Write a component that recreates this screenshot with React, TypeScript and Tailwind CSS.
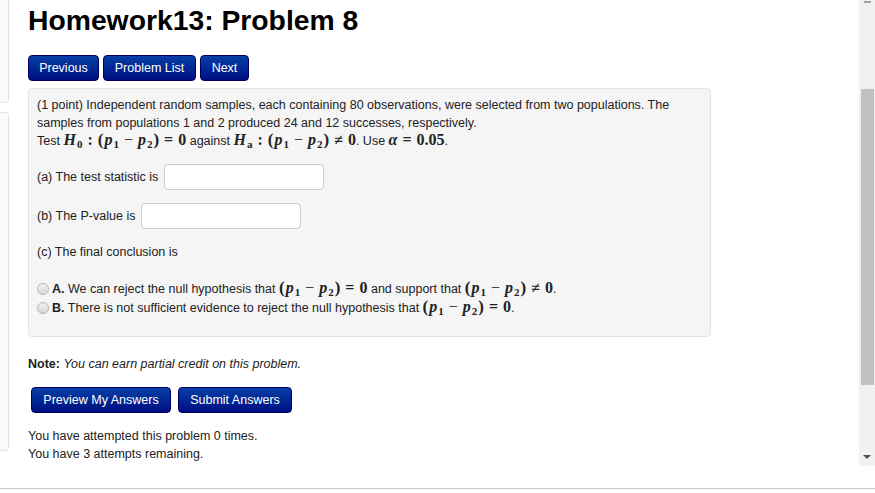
import React from 'react';

const sans = { fontFamily: '"Liberation Sans", Arial, sans-serif' };

function M({ children }: { children: React.ReactNode }) {
  return (
    <span className="font-bold text-[16px] leading-[0]" style={{ fontFamily: '"Liberation Serif", "Times New Roman", serif' }}>
      {children}
    </span>
  );
}

function V({ n, sub }: { n: string; sub?: string }) {
  return (
    <span>
      <i>{n}</i>
      {sub && <span className="ml-[1px] text-[11px] relative top-[3px]">{sub}</span>}
    </span>
  );
}

function Op({ c }: { c: string }) {
  return <span className="mx-[5px]">{c}</span>;
}

function Diff() {
  return (
    <>
      <span className="mr-[1px] text-[17px]">(</span>
      <V n="p" sub="1" />
      <span className="mx-[5px] font-normal">−</span>
      <V n="p" sub="2" />
      <span className="ml-[1px] text-[17px]">)</span>
    </>
  );
}

function NavButton({ label, className = '' }: { label: string; className?: string }) {
  return (
    <button
      className={`h-[26px] rounded-[4px] border border-[#00005e] bg-gradient-to-b from-[#0b3ea6] to-[#000a82] text-[12.5px] text-white ${className}`}
    >
      {label}
    </button>
  );
}

function AnswerInput({ className = '' }: { className?: string }) {
  return <input type="text" className={`h-[26px] w-[160px] rounded-[4px] border border-[#cccccc] bg-white ${className}`} />;
}

function Radio() {
  return (
    <span className="inline-block h-[12px] w-[12px] shrink-0 rounded-full border border-[#b5b5b5] bg-gradient-to-b from-[#f4f4f4] to-[#d6d6d6]" />
  );
}

export default function App() {
  return (
    <div className="h-[493px] w-[875px] overflow-hidden bg-white text-[#222]" style={sans}>
      <div className="flex h-[488px]">
        {/* sidebar edges peeking in from the left */}
        <div className="flex w-[9px] shrink-0 flex-col">
          <div className="h-[103px] rounded-br-[4px] border-b border-r border-[#e3e3e3] bg-[#fafafa]" />
          <div className="mt-[9px] h-[339px] rounded-r-[4px] border-y border-r border-[#e3e3e3] bg-[#fafafa]" />
        </div>

        <div className="flex-1 pl-[19px]">
          <h1 className="mt-[5px] text-[28.3px] font-bold leading-[30px] text-black">Homework13: Problem 8</h1>

          <div className="mt-[20px] flex gap-1">
            <NavButton label="Previous" className="w-[71px]" />
            <NavButton label="Problem List" className="w-[93px]" />
            <NavButton label="Next" className="w-[49px]" />
          </div>

          <div className="mt-[7px] h-[249px] w-[683px] rounded-[4px] border border-[#e3e3e3] bg-[#f5f5f5] px-[8px] pt-[7px] text-[12.5px] leading-[18px]">
            <p>
              (1 point) Independent random samples, each containing 80 observations, were selected from two populations. The
              samples from populations 1 and 2 produced 24 and 12 successes, respectively.
              <br />
              Test{' '}
              <M>
                <V n="H" sub="0" />
                <Op c=":" />
                <Diff />
                <Op c="=" />0
              </M>{' '}
              against{' '}
              <M>
                <V n="H" sub="a" />
                <Op c=":" />
                <Diff />
                <Op c="≠" />0
              </M>
              . Use{' '}
              <M>
                <i>α</i>
                <Op c="=" />0.05
              </M>
              .
            </p>

            <div className="mt-[14px] flex items-center gap-[6px]">
              <span>(a) The test statistic is</span>
              <AnswerInput />
            </div>

            <div className="mt-[13px] flex items-center gap-[6px]">
              <span>(b) The P-value is</span>
              <AnswerInput />
            </div>

            <p className="mt-[14px]">(c) The final conclusion is</p>

            <div className="mt-[19px] flex flex-col">
              <div className="flex items-center gap-[3px]">
                <Radio />
                <span>
                  <b>A.</b> We can reject the null hypothesis that{' '}
                  <M>
                    <Diff />
                    <Op c="=" />0
                  </M>{' '}
                  and support that{' '}
                  <M>
                    <Diff />
                    <Op c="≠" />0
                  </M>
                  .
                </span>
              </div>
              <div className="mt-[1px] flex items-center gap-[3px]">
                <Radio />
                <span>
                  <b>B.</b> There is not sufficient evidence to reject the null hypothesis that{' '}
                  <M>
                    <Diff />
                    <Op c="=" />0
                  </M>
                  .
                </span>
              </div>
            </div>
          </div>

          <p className="mt-[18px] text-[12.5px] leading-[18px]">
            <b>Note:</b> <i>You can earn partial credit on this problem.</i>
          </p>

          <div className="ml-[3px] mt-[14px] flex gap-[7px]">
            <NavButton label="Preview My Answers" className="w-[140px]" />
            <NavButton label="Submit Answers" className="w-[114px]" />
          </div>

          <div className="mt-[14px] text-[12.5px] leading-[18px]">
            <p>You have attempted this problem 0 times.</p>
            <p>You have 3 attempts remaining.</p>
          </div>
        </div>

        {/* scrollbar */}
        <div className="flex h-[466px] w-[16px] shrink-0 flex-col items-center bg-[#f1f1f1]">
          <div className="mt-[1px] h-[2px] w-[7px] bg-[#a3a3a3]" />
          <div className="mt-[86px] h-[296px] w-[13px] bg-[#c1c1c1]" />
          <div className="mt-auto mb-[7px] h-0 w-0 border-x-[4px] border-t-[4px] border-x-transparent border-t-[#505050]" />
        </div>
      </div>
      <div className="h-[1px] bg-[#c8c8c8]" />
    </div>
  );
}
